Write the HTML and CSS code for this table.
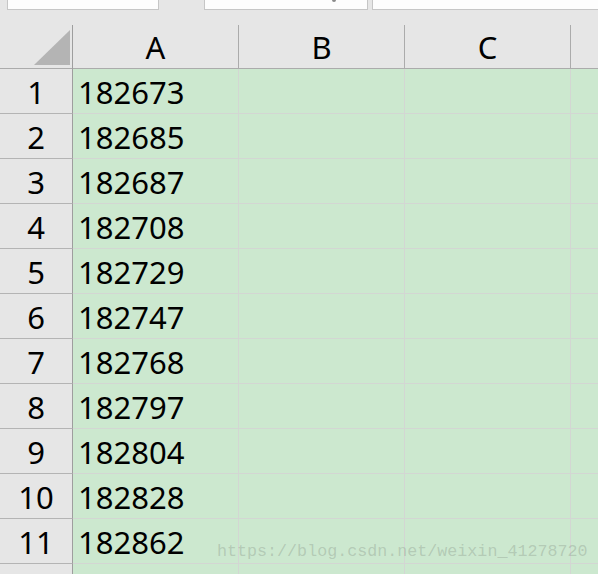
FILE: index.html
```html
<!DOCTYPE html>
<html>
<head>
<meta charset="utf-8">
<link rel="stylesheet" href="styles.css">
</head>
<body>
<div class="app">
  <div class="topbar">
    <div class="box box-name"></div>
    <div class="box box-mid"><span class="caret"></span></div>
    <div class="box box-formula"></div>
  </div>
  <div class="sheet">
    <div class="hd corner"><svg width="36" height="35" viewBox="0 0 36 35"><polygon points="0,35 36,35 36,0" fill="#b4b4b4"/></svg></div>
    <div class="hd col">A</div>
    <div class="hd col">B</div>
    <div class="hd col">C</div>
    <div class="hd col last"></div>

    <div class="rh">1</div><div class="c">182673</div><div class="c"></div><div class="c"></div><div class="c last"></div>
    <div class="rh">2</div><div class="c">182685</div><div class="c"></div><div class="c"></div><div class="c last"></div>
    <div class="rh">3</div><div class="c">182687</div><div class="c"></div><div class="c"></div><div class="c last"></div>
    <div class="rh">4</div><div class="c">182708</div><div class="c"></div><div class="c"></div><div class="c last"></div>
    <div class="rh">5</div><div class="c">182729</div><div class="c"></div><div class="c"></div><div class="c last"></div>
    <div class="rh">6</div><div class="c">182747</div><div class="c"></div><div class="c"></div><div class="c last"></div>
    <div class="rh">7</div><div class="c">182768</div><div class="c"></div><div class="c"></div><div class="c last"></div>
    <div class="rh">8</div><div class="c">182797</div><div class="c"></div><div class="c"></div><div class="c last"></div>
    <div class="rh">9</div><div class="c">182804</div><div class="c"></div><div class="c"></div><div class="c last"></div>
    <div class="rh">10</div><div class="c">182828</div><div class="c"></div><div class="c"></div><div class="c last"></div>
    <div class="rh">11</div><div class="c">182862</div><div class="c"></div><div class="c"></div><div class="c last"></div>
    <div class="rh"></div><div class="c"></div><div class="c"></div><div class="c"></div><div class="c last"></div>
  </div>
  <div class="watermark">https://blog.csdn.net/weixin_41278720</div>
</div>
</body>
</html>
```
FILE: styles.css
```css
html, body {
  margin: 0;
  padding: 0;
  background: #e6e6e6;
  overflow: hidden;
}
.app {
  position: relative;
  width: 598px;
  height: 574px;
  overflow: hidden;
  background: #e6e6e6;
  font-family: "Noto Sans", "Open Sans", sans-serif;
}
.topbar {
  height: 25px;
  display: flex;
  align-items: flex-start;
}
.box {
  height: 9px;
  background: #fdfdfd;
  border: 1px solid #c6c6c6;
  border-top: none;
  box-sizing: content-box;
}
.box-name {
  margin-left: 7px;
  width: 150px;
}
.box-mid {
  margin-left: 45px;
  width: 162px;
  position: relative;
}
.caret {
  position: absolute;
  left: 127px;
  top: 0;
  width: 4px;
  height: 2px;
  background: #8a8a8a;
  border-radius: 0 0 2px 2px;
}
.box-formula {
  margin-left: 4px;
  flex: 1;
  margin-right: -10px;
}
.sheet {
  display: grid;
  grid-template-columns: 73px 166px 166px 166px 40px;
  grid-template-rows: 44px repeat(12, 45px);
}
.hd {
  background: #e6e6e6;
  border-right: 1px solid #ababab;
  border-bottom: 2px solid #ababab;
  margin-bottom: -1px;
  display: flex;
  align-items: center;
  justify-content: center;
  font-size: 31px;
  color: #000;
  line-height: 1;
}
.hd.col {
  padding-top: 1px;
}
.corner {
  justify-content: flex-end;
  align-items: flex-end;
  padding: 0 2px 3px 0;
  border-right: 1px solid #9e9e9e;
}
.corner svg {
  display: block;
}
.hd.last {
  border-right: none;
}
.rh {
  background: #e6e6e6;
  border-right: 1px solid #9e9e9e;
  border-bottom: 1px solid #b4b4b4;
  font-size: 31px;
  line-height: 45px;
  text-align: center;
  color: #000;
  padding-top: 1px;
  box-sizing: border-box;
}
.c {
  background: #cce8cf;
  border-right: 1px solid #d3d6d3;
  border-bottom: 1px solid #d3d6d3;
  font-size: 31px;
  line-height: 44px;
  padding: 1px 0 0 5px;
  color: #000;
  box-sizing: border-box;
  white-space: nowrap;
}
.c.last {
  border-right: none;
}
.watermark {
  position: absolute;
  left: 217px;
  top: 542px;
  font-family: "Liberation Mono", "DejaVu Sans Mono", monospace;
  font-size: 16.7px;
  line-height: 20px;
  color: rgba(120, 130, 120, 0.3);
  white-space: nowrap;
}
```
